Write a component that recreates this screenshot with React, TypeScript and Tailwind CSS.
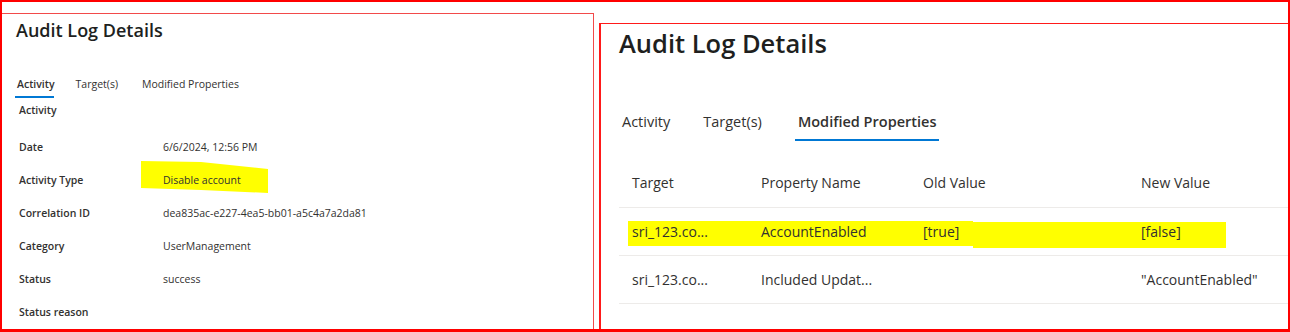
const font = { fontFamily: '"Open Sans", "Noto Sans", sans-serif' };

const leftRows: [string, string][] = [
  ["Date", "6/6/2024, 12:56 PM"],
  ["Activity Type", "Disable account"],
  ["Correlation ID", "dea835ac-e227-4ea5-bb01-a5c4a7a2da81"],
  ["Category", "UserManagement"],
  ["Status", "success"],
  ["Status reason", ""],
];

function LeftPanel() {
  return (
    <section className="mt-[11px] flex h-[317px] w-[592px] flex-col overflow-hidden border-t border-r border-[#f24a4a] text-[#323130]">
      <h1 className="pl-[14px] pt-[3px] text-[18px] font-semibold leading-[26px] text-[#201f1e]">
        Audit Log Details
      </h1>

      <nav className="mt-[33px] flex pl-[13px] text-[10.5px] leading-[16px]">
        <div className="flex flex-col">
          <span className="px-[2px] font-semibold">Activity</span>
          <span className="mt-[4px] h-[2px] w-[39px] bg-[#0078d4]" />
        </div>
        <span className="ml-[19px]">Target(s)</span>
        <span className="ml-[24px]">Modified Properties</span>
      </nav>

      <div className="mt-[4px] pl-[17px] text-[10.5px] font-semibold leading-[16px]">
        Activity
      </div>

      <div className="mt-[13px] flex flex-col text-[10.5px]">
        {leftRows.map(([label, value]) => (
          <div key={label} className="flex h-[33px] items-center pl-[17px]">
            <span className="w-[144px] font-semibold">{label}</span>
            <span className="relative">
              {label === "Activity Type" ? (
                <svg
                  className="absolute left-[-22px] top-[-13px]"
                  width="130"
                  height="34"
                  viewBox="0 0 130 34"
                >
                  <polygon
                    points="0,1 60,2 127,9 127,33 60,30 0,28"
                    fill="#ffff00"
                  />
                </svg>
              ) : null}
              <span className="relative">{value}</span>
            </span>
          </div>
        ))}
      </div>
    </section>
  );
}

const cols = ["w-[129px]", "w-[162px]", "w-[218px]", "flex-1"];

const tableRows: string[][] = [
  ["sri_123.co...", "AccountEnabled", "[true]", "[false]"],
  ["sri_123.co...", "Included Updat...", "", "\"AccountEnabled\""],
];

function RightPanel() {
  return (
    <section className="ml-[5px] mt-[21px] flex flex-1 flex-col border-t border-l-2 border-[#ff1a1a] text-[#323130]">
      <h1 className="pl-[18px] pt-[2px] text-[25.5px] font-semibold leading-[34px] text-[#201f1e]">
        Audit Log Details
      </h1>

      <nav className="mt-[52px] flex pl-[19px] text-[14.5px] leading-[20px]">
        <span className="px-[2px]">Activity</span>
        <span className="ml-[31px]">Target(s)</span>
        <div className="ml-[33px] flex flex-col">
          <span className="px-[3px] font-semibold">Modified Properties</span>
          <span className="mt-[7px] h-[2px] bg-[#0078d4]" />
        </div>
      </nav>

      <div className="mt-[17px] flex flex-col pl-[18px] text-[14px]">
        <div className="flex h-[50px] items-center border-b border-[#edebe9] font-medium">
          {["Target", "Property Name", "Old Value", "New Value"].map((h, i) => (
            <span key={h} className={`${cols[i]} pl-[13px]`}>
              {h}
            </span>
          ))}
        </div>
        {tableRows.map((row, r) => (
          <div
            key={r}
            className="relative flex h-[48px] items-center border-b border-[#edebe9]"
          >
            {r === 0 ? (
              <svg
                className="absolute left-[9px] top-[13px]"
                width="598"
                height="28"
                viewBox="0 0 598 28"
              >
                <polygon
                  points="0,0 345,0 345,1 598,1 598,27 345,27 345,25 0,25"
                  fill="#ffff00"
                />
              </svg>
            ) : null}
            {row.map((cell, i) => (
              <span key={i} className={`relative ${cols[i]} pl-[13px]`}>
                {cell}
              </span>
            ))}
          </div>
        ))}
      </div>
    </section>
  );
}

export default function App() {
  return (
    <main
      className="flex h-[332px] w-[1290px] overflow-hidden border-2 border-b-[3px] border-[#ff0000] bg-white"
      style={font}
    >
      <LeftPanel />
      <RightPanel />
    </main>
  );
}
